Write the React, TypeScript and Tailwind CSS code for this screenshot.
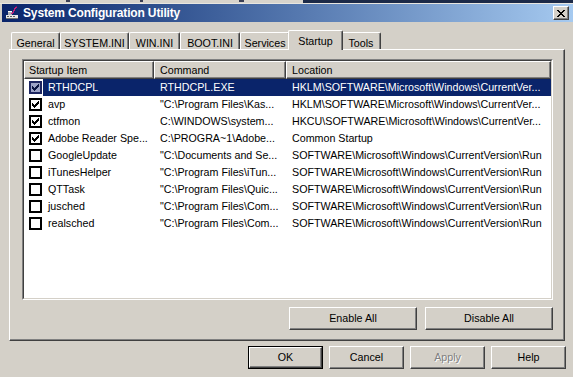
import React from "react";

const rows: { name: string; cmd: string; loc: string; checked: boolean }[] = [
  { name: "RTHDCPL", cmd: "RTHDCPL.EXE", loc: "HKLM\\SOFTWARE\\Microsoft\\Windows\\CurrentVer...", checked: true },
  { name: "avp", cmd: "\"C:\\Program Files\\Kas...", loc: "HKLM\\SOFTWARE\\Microsoft\\Windows\\CurrentVer...", checked: true },
  { name: "ctfmon", cmd: "C:\\WINDOWS\\system...", loc: "HKCU\\SOFTWARE\\Microsoft\\Windows\\CurrentVer...", checked: true },
  { name: "Adobe Reader Spe...", cmd: "C:\\PROGRA~1\\Adobe...", loc: "Common Startup", checked: true },
  { name: "GoogleUpdate", cmd: "\"C:\\Documents and Se...", loc: "SOFTWARE\\Microsoft\\Windows\\CurrentVersion\\Run", checked: false },
  { name: "iTunesHelper", cmd: "\"C:\\Program Files\\iTun...", loc: "SOFTWARE\\Microsoft\\Windows\\CurrentVersion\\Run", checked: false },
  { name: "QTTask", cmd: "\"C:\\Program Files\\Quic...", loc: "SOFTWARE\\Microsoft\\Windows\\CurrentVersion\\Run", checked: false },
  { name: "jusched", cmd: "\"C:\\Program Files\\Com...", loc: "SOFTWARE\\Microsoft\\Windows\\CurrentVersion\\Run", checked: false },
  { name: "realsched", cmd: "\"C:\\Program Files\\Com...", loc: "SOFTWARE\\Microsoft\\Windows\\CurrentVersion\\Run", checked: false },
];

const tabs = [
  { label: "General", w: "w-[49px]" },
  { label: "SYSTEM.INI", w: "w-[69px]" },
  { label: "WIN.INI", w: "w-[51px]" },
  { label: "BOOT.INI", w: "w-[60px]" },
  { label: "Services", w: "w-[50px]" },
  { label: "Startup", w: "w-[55px]", selected: true },
  { label: "Tools", w: "w-[40px]" },
];

function CheckBox({ checked, selected }: { checked: boolean; selected: boolean }) {
  return (
    <div
      className={
        selected
          ? "w-[13px] h-[13px] border-2 border-[#1c2560] bg-[#9ca3c6] flex items-center justify-center"
          : "w-[13px] h-[13px] border-2 border-black bg-white flex items-center justify-center"
      }
    >
      {checked && (
        <svg width="7" height="7" viewBox="0 0 7 7" shapeRendering="crispEdges">
          <path
            d="M0 2h1v1h1v1h1v-1h1v-1h1v-1h1v-1h1v3h-1v1h-1v1h-1v1h-1v1h-1v-1h-1v-1h-1v-1h-1z"
            fill={selected ? "#0a1440" : "#000"}
          />
        </svg>
      )}
    </div>
  );
}

function Button({ label, className = "", disabled = false, isDefault = false }: { label: string; className?: string; disabled?: boolean; isDefault?: boolean }) {
  const inner = (
    <div
      className={
        "h-full w-full flex items-center justify-center border-t border-l border-t-white border-l-white border-r border-b border-r-[#404040] border-b-[#404040] shadow-[inset_-1px_-1px_#808080] bg-[#d4d0c8]"
      }
    >
      <span className={disabled ? "text-[#808080] [text-shadow:1px_1px_#ffffff]" : "text-black"}>{label}</span>
    </div>
  );
  if (isDefault) {
    return <div className={"h-[23px] border border-black " + className}>{inner}</div>;
  }
  return <div className={"h-[23px] " + className}>{inner}</div>;
}

export default function App() {
  return (
    <div className="w-[573px] h-[377px] bg-[#d4d0c8] overflow-hidden flex flex-col font-['Liberation_Sans',Arial,sans-serif] text-[10.7px] text-black select-none">
      {/* strip behind window */}
      <div className="h-[3px] flex shrink-0">
        <div className="w-[303px] h-full bg-[#d8d4cc] relative">
          <div className="absolute left-[66px] top-0 w-[4px] h-[2px] bg-[#3a3f55]" />
          <div className="absolute left-[140px] top-0 w-[3px] h-[2px] bg-[#3a3f55]" />
          <div className="absolute left-[239px] top-0 w-[5px] h-[2px] bg-[#3a3f55]" />
        </div>
        <div className="flex-1 h-full bg-[#1c2a48]" />
      </div>
      <div className="h-[1px] bg-[#e8e6e0] shrink-0" />
      {/* title bar */}
      <div className="ml-[2px] h-[18px] shrink-0 flex items-center bg-gradient-to-r from-[#0a246a] to-[#a6caf0] pl-[2px] pr-[4px]">
        <svg width="16" height="16" viewBox="0 0 16 16" className="shrink-0" shapeRendering="crispEdges">
          <rect x="2" y="10" width="12" height="4" fill="#e8e8e8" />
          <rect x="2" y="13" width="12" height="1" fill="#707070" />
          <rect x="3" y="11" width="2" height="1" fill="#606060" />
          <rect x="6" y="11" width="2" height="1" fill="#606060" />
          <rect x="9" y="11" width="2" height="1" fill="#606060" />
          <rect x="4" y="6" width="4" height="4" fill="#b0b0b8" />
          <rect x="4" y="6" width="4" height="1" fill="#ffffff" />
          <path d="M7 9 L12 1 L13 2 L8 10 Z" fill="#c0207c" />
          <rect x="12" y="1" width="1" height="1" fill="#7a1050" />
        </svg>
        <span className="ml-[3px] text-white font-bold text-[12px] leading-none tracking-[-0.15px]">System Configuration Utility</span>
        <div className="flex-1" />
        <div className="w-[16px] h-[14px] bg-[#d4d0c8] border-t border-l border-t-white border-l-white border-r border-b border-r-[#404040] border-b-[#404040] shadow-[inset_-1px_-1px_#808080] flex items-center justify-center">
          <svg width="8" height="7" viewBox="0 0 8 7" shapeRendering="crispEdges">
            <path d="M0 0h2v1h1v1h2v-1h1v-1h2v1h-1v1h-1v1h-1v1h1v1h1v1h1v1h-2v-1h-1v-1h-2v1h-1v1h-2v-1h1v-1h1v-1h1v-1h-1v-1h-1v-1h-1z" fill="#000" />
          </svg>
        </div>
      </div>
      {/* tabs */}
      <div className="mt-[8px] h-[19px] shrink-0 flex items-end pl-[11px] relative z-10">
        {tabs.map((t) =>
          t.selected ? (
            <div
              key={t.label}
              className={t.w + " -mx-[2px] h-[20px] relative top-[1px] bg-[#d4d0c8] border-t border-l border-t-white border-l-white border-r border-r-[#404040] rounded-t-[2px] shadow-[inset_-1px_0_#808080] flex items-start justify-center pt-[2px]"}
            >
              <span>{t.label}</span>
            </div>
          ) : (
            <div
              key={t.label}
              className={t.w + " h-[17px] bg-[#d4d0c8] border-t border-l border-t-white border-l-white border-r border-r-[#404040] rounded-t-[2px] shadow-[inset_-1px_0_#808080] flex items-start justify-center pt-[2px]"}
            >
              <span>{t.label}</span>
            </div>
          )
        )}
      </div>
      {/* tab panel */}
      <div className="ml-[9px] w-[556px] h-[292px] shrink-0 border-t border-l border-t-white border-l-white border-r border-b border-r-[#404040] border-b-[#404040] shadow-[inset_-1px_-1px_#808080] flex flex-col pt-[9px] pl-[12px]">
        {/* list view */}
        <div className="w-[531px] h-[241px] border-t border-l border-t-[#808080] border-l-[#808080] border-r border-b border-r-white border-b-white">
          <div className="w-full h-full border-t border-l border-t-[#404040] border-l-[#404040] border-r border-b border-r-[#d4d0c8] border-b-[#d4d0c8] bg-white flex flex-col overflow-hidden">
            <div className="h-[18px] shrink-0 flex">
              <div className="w-[130px] h-full bg-[#d4d0c8] border-t border-l border-t-white border-l-white border-r border-b border-r-[#404040] border-b-[#404040] shadow-[inset_-1px_-1px_#808080] flex items-center pl-[4px]">
                Startup Item
              </div>
              <div className="w-[132px] h-full bg-[#d4d0c8] border-t border-l border-t-white border-l-white border-r border-b border-r-[#404040] border-b-[#404040] shadow-[inset_-1px_-1px_#808080] flex items-center pl-[5px]">
                Command
              </div>
              <div className="w-[265px] h-full bg-[#d4d0c8] border-t border-l border-t-white border-l-white border-r border-b border-r-[#404040] border-b-[#404040] shadow-[inset_-1px_-1px_#808080] flex items-center pl-[5px]">
                Location
              </div>
            </div>
            {rows.map((r, i) => {
              const sel = i === 0;
              return (
                <div key={r.name + i} className="h-[17px] shrink-0 flex items-center">
                  <div className="w-[19px] h-full flex items-center pl-[5px] shrink-0">
                    <CheckBox checked={r.checked} selected={sel} />
                  </div>
                  <div className={"flex-1 h-full flex items-center " + (sel ? "bg-[#0a246a] text-white" : "")}>
                    <div className="w-[111px] pl-[5px] whitespace-nowrap overflow-hidden shrink-0">{r.name}</div>
                    <div className="w-[132px] pl-[6px] whitespace-nowrap overflow-hidden shrink-0">{r.cmd}</div>
                    <div className="flex-1 pl-[6px] whitespace-nowrap overflow-hidden">{r.loc}</div>
                  </div>
                </div>
              );
            })}
          </div>
        </div>
        <div className="mt-[7px] w-[531px] flex justify-end gap-[8px]">
          <Button label="Enable All" className="w-[128px]" />
          <Button label="Disable All" className="w-[128px]" />
        </div>
      </div>
      {/* bottom buttons */}
      <div className="mt-[5px] flex justify-end gap-[6px] pr-[7px]">
        <Button label="OK" className="w-[75px]" isDefault />
        <Button label="Cancel" className="w-[75px]" />
        <Button label="Apply" className="w-[75px]" disabled />
        <Button label="Help" className="w-[75px]" />
      </div>
    </div>
  );
}
